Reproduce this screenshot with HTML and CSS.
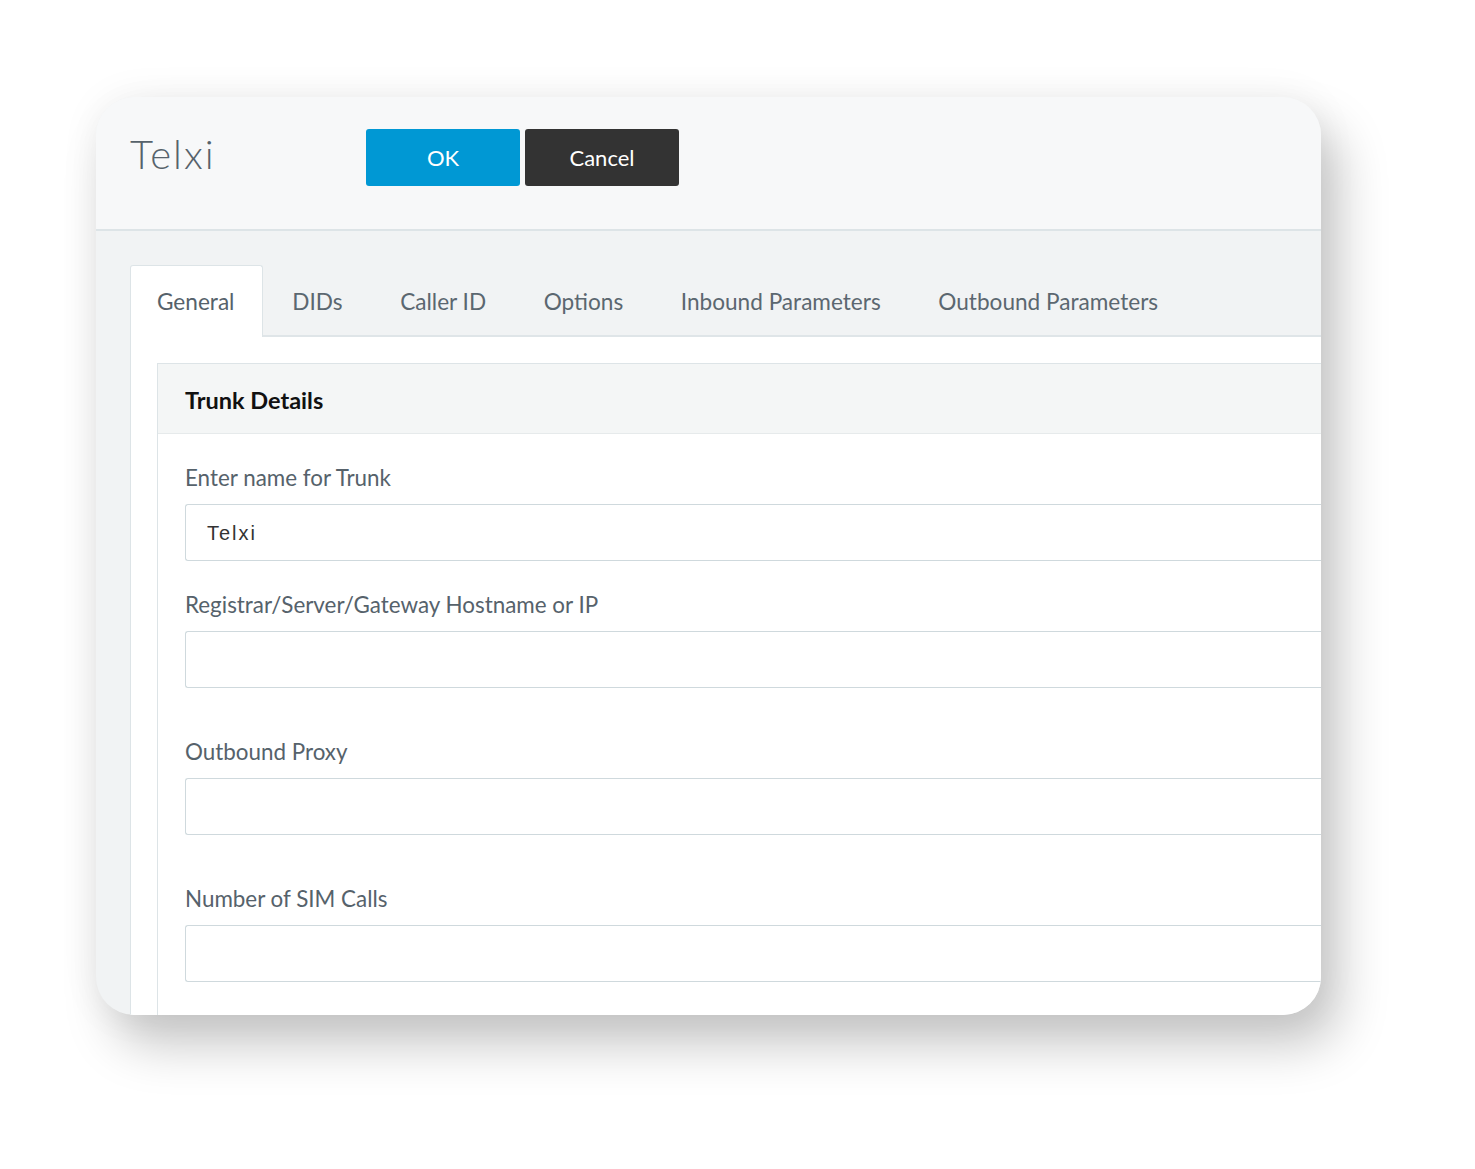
FILE: index.html
```html
<!DOCTYPE html>
<html>
<head>
<meta charset="utf-8">
<link rel="stylesheet" href="styles.css">
</head>
<body>
<div class="stage">
  <div class="card">
    <div class="header">
      <div class="title">Telxi</div>
      <button class="btn btn-ok">OK</button>
      <button class="btn btn-cancel">Cancel</button>
    </div>
    <div class="tabs-area">
      <div class="tabs">
        <div class="tab active">General</div>
        <div class="tab">DIDs</div>
        <div class="tab">Caller ID</div>
        <div class="tab">Options</div>
        <div class="tab">Inbound Parameters</div>
        <div class="tab">Outbound Parameters</div>
      </div>
      <div class="panel">
        <div class="box">
          <div class="box-head">Trunk Details</div>
          <div class="box-body">
            <div class="field field-tight">
              <div class="label">Enter name for Trunk</div>
              <div class="input">Telxi</div>
            </div>
            <div class="field">
              <div class="label">Registrar/Server/Gateway Hostname or IP</div>
              <div class="input"></div>
            </div>
            <div class="field">
              <div class="label">Outbound Proxy</div>
              <div class="input"></div>
            </div>
            <div class="field">
              <div class="label">Number of SIM Calls</div>
              <div class="input"></div>
            </div>
          </div>
        </div>
      </div>
    </div>
  </div>
</div>
</body>
</html>
```

FILE: styles.css
```css
html, body {
  margin: 0;
  padding: 0;
  background: #ffffff;
}
body {
  font-family: "Lato", "Liberation Sans", sans-serif;
  width: 1475px;
  height: 1169px;
  overflow: hidden;
}
.stage {
  padding: 97px 0 0 96px;
}
.card {
  width: 1225px;
  height: 918px;
  border-radius: 38px;
  overflow: hidden;
  background: #f1f3f4;
  box-shadow: 18px 30px 50px rgba(0, 0, 0, 0.22), 0 0 40px rgba(0, 0, 0, 0.06);
  display: flex;
  flex-direction: column;
}
.header {
  height: 134px;
  flex: none;
  box-sizing: border-box;
  background: #f7f8f9;
  border-bottom: 2px solid #dde4e7;
  display: flex;
  align-items: flex-start;
  padding: 32px 0 0 34px;
}
.title {
  width: 236px;
  font-size: 40px;
  font-weight: 300;
  color: #56626b;
  line-height: 50px;
  letter-spacing: 2px;
}
.btn {
  width: 154px;
  height: 57px;
  border: none;
  border-radius: 3px;
  color: #ffffff;
  font-family: "Lato", "Liberation Sans", sans-serif;
  font-size: 22px;
  padding: 0;
  margin: 0 5px 0 0;
}
.btn-ok {
  background: #0098d4;
}
.btn-cancel {
  background: #333333;
}
.tabs-area {
  flex: 1;
  padding: 34px 0 0 34px;
  display: flex;
  flex-direction: column;
}
.tabs {
  display: flex;
  border-bottom: 2px solid #dfe5e8;
  height: 70px;
  box-sizing: content-box;
}
.tab {
  padding: 0 27.8px;
  font-size: 22.6px;
  color: #5b6770;
  line-height: 72px;
  border: 1px solid transparent;
  border-bottom: none;
}
.tab.active {
  background: #ffffff;
  border-color: #dde4e7;
  border-radius: 3px 3px 0 0;
  margin-bottom: -2px;
  height: 71px;
  padding: 0 28px 0 26px;
  color: #56626b;
}
.panel {
  flex: 1;
  background: #ffffff;
  border-left: 1px solid #dde4e7;
  padding: 26px 0 0 26px;
}
.box {
  width: 1300px;
  border: 1px solid #dde4e7;
  border-right: none;
  height: 800px;
}
.box-head {
  height: 69px;
  background: #f4f6f6;
  border-bottom: 1px solid #e6eaeb;
  padding-left: 27px;
  font-size: 23.5px;
  font-weight: 700;
  color: #111111;
  line-height: 72px;
}
.box-body {
  padding: 30px 0 0 27px;
}
.field {
  margin-bottom: 50px;
}
.field-tight {
  margin-bottom: 30px;
}
.label {
  font-size: 22.4px;
  line-height: 28px;
  color: #56626b;
  margin-bottom: 12px;
}
.input {
  height: 55px;
  border: 1px solid #cfd9dd;
  border-right: none;
  border-radius: 3px 0 0 3px;
  padding-left: 21px;
  font-family: "Liberation Sans", Arial, sans-serif;
  font-size: 20px;
  letter-spacing: 2px;
  color: #333333;
  line-height: 57px;
}
```
